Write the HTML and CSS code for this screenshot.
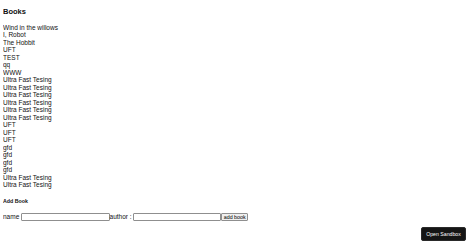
FILE: index.html
```html
<!DOCTYPE html>
<html>
<head>
<meta charset="utf-8">
<link rel="stylesheet" href="styles.css">
</head>
<body>
<div class="app">
  <h3 class="title">Books</h3>
  <div class="list">
    <div class="item">Wind in the willows</div>
    <div class="item">I, Robot</div>
    <div class="item">The Hobbit</div>
    <div class="item">UFT</div>
    <div class="item">TEST</div>
    <div class="item">qq</div>
    <div class="item">WWW</div>
    <div class="item">Ultra Fast Tesing</div>
    <div class="item">Ultra Fast Tesing</div>
    <div class="item">Ultra Fast Tesing</div>
    <div class="item">Ultra Fast Tesing</div>
    <div class="item">Ultra Fast Tesing</div>
    <div class="item">Ultra Fast Tesing</div>
    <div class="item">UFT</div>
    <div class="item">UFT</div>
    <div class="item">UFT</div>
    <div class="item">gfd</div>
    <div class="item">gfd</div>
    <div class="item">gfd</div>
    <div class="item">gfd</div>
    <div class="item">Ultra Fast Tesing</div>
    <div class="item">Ultra Fast Tesing</div>
  </div>
  <h5 class="subtitle">Add Book</h5>
  <form class="form">
    <label class="label">name</label><input class="field" type="text"><label class="label">author :</label><input class="field field-author" type="text"><button class="add" type="button">add book</button>
  </form>
</div>
<button class="sandbox" type="button">Open Sandbox</button>
</body>
</html>
```

FILE: styles.css
```css
html, body {
  background: #ffffff;
}
body {
  margin: 0 3px;
  padding-top: 7px;
  font-family: "Liberation Sans", Arial, sans-serif;
  color: #111111;
  font-size: 6.5px;
}
.title {
  font-size: 7.5px;
  font-weight: bold;
  margin: 0 0 7.5px;
}
.list {
  display: flex;
  flex-direction: column;
}
.item {
  font-size: 6.5px;
  line-height: 7.5px;
}
.subtitle {
  font-size: 5.3px;
  font-weight: bold;
  margin: 9px 0;
}
.form {
  display: flex;
  align-items: center;
  margin: 0;
  height: 8px;
}
.label {
  font-size: 6.5px;
  line-height: 8px;
}
.label + .field {
  margin-left: 1.3px;
}
.field {
  box-sizing: border-box;
  width: 89px;
  height: 8px;
  padding: 0 1px;
  border: 1px solid #8f8f8f;
  border-radius: 1px;
  font-size: 5.3px;
  margin: 0;
}
.field-author {
  width: 88px;
}
.add {
  box-sizing: border-box;
  height: 8px;
  width: 26.5px;
  padding: 0;
  margin: 0 0 0 0.5px;
  border: 1px solid #8f8f8f;
  border-radius: 1px;
  background: #efefef;
  font-family: "Liberation Sans", Arial, sans-serif;
  font-size: 5.3px;
  line-height: 6px;
  color: #000000;
}
.sandbox {
  position: fixed;
  right: 8px;
  bottom: 7px;
  width: 45px;
  height: 14px;
  padding: 0;
  border: 1px solid #2a2a2a;
  border-radius: 2px;
  background: #151515;
  color: #ffffff;
  font-family: "Liberation Sans", Arial, sans-serif;
  font-size: 5.2px;
}
```
